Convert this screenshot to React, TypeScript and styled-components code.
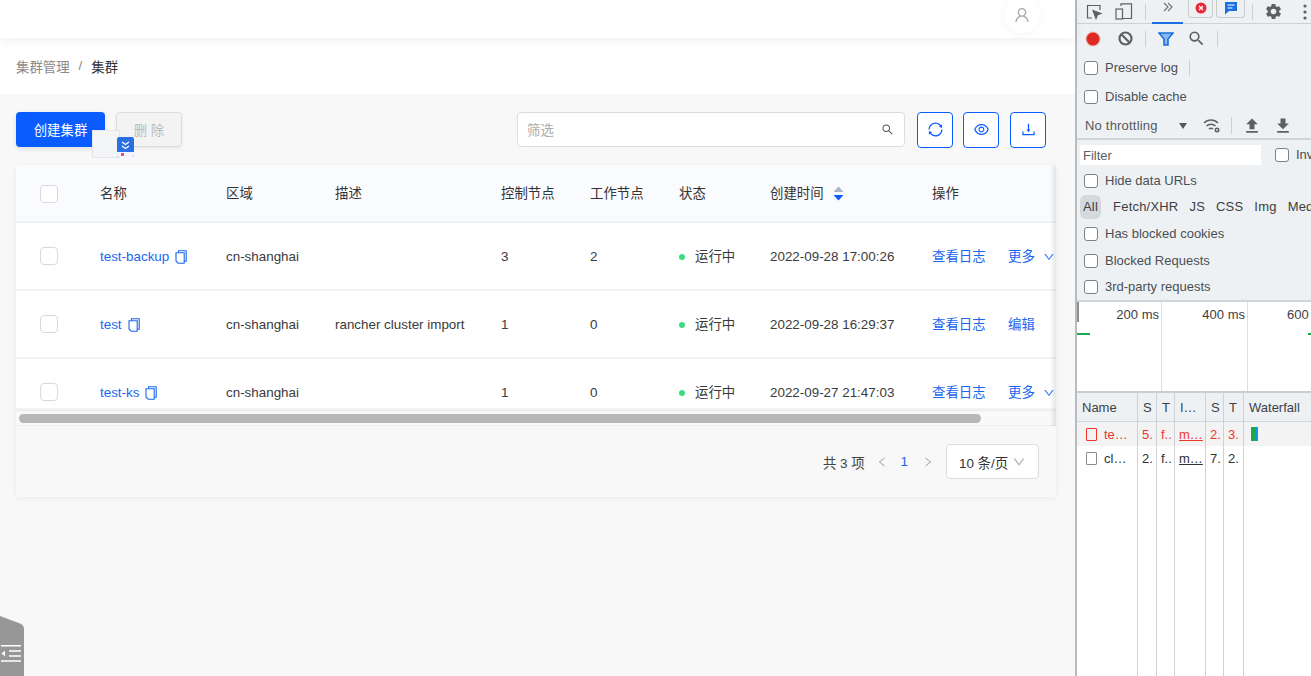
import React from "react";
import styled, { createGlobalStyle } from "styled-components";
import { AiOutlineSync, AiOutlineEye, AiOutlineDownload, AiOutlineUser, AiOutlineDown, AiOutlineLeft, AiOutlineRight, AiOutlineSearch } from "react-icons/ai";
import { MdSearch, MdSettings, MdFileUpload, MdFileDownload } from "react-icons/md";

const Global = createGlobalStyle`
  html, body { margin: 0; padding: 0; height: 100%; overflow: hidden; }
  * { box-sizing: border-box; }
  body { font-family: "Liberation Sans", "Noto Sans CJK SC", sans-serif; }
`;
const BLUE = "#0a5cff";
const LINK = "#1a66f0";

const Page = styled.div`display: flex; width: 1311px; height: 676px; overflow: hidden; position: relative;`;
const Main = styled.main`width: 1075px; height: 676px; background: #f8f8f8; display: flex; flex-direction: column; flex: none; position: relative;`;
const Header = styled.header`height: 38px; flex: none; background: #fff; box-shadow: 0 2px 10px rgba(0,0,0,.07); display: flex; justify-content: flex-end; padding-right: 35px; position: relative; z-index: 2;`;
const Avatar = styled.div`width: 36px; height: 36px; margin-top: -3px; border-radius: 50%; background: #fff; box-shadow: 0 1px 8px rgba(0,0,0,.05); display: flex; align-items: center; justify-content: center; color: #aaa; font-size: 18px;`;
const Crumbs = styled.nav`height: 56px; flex: none; background: #fff; display: flex; align-items: center; padding: 0 16px 1px; font-size: 13.4px; color: #8a8a8a; gap: 9px;`;
const CrumbNow = styled.span`color: #333;`;
const Body = styled.div`padding: 17px 19px 0 16px; display: flex; flex-direction: column;`;
const Toolbar = styled.div`height: 36px; display: flex; align-items: center; position: relative; padding-right: 10px;`;
const Primary = styled.button`width: 89px; height: 35px; border: 0; border-radius: 4px; background: ${BLUE}; color: #fff; font: inherit; font-size: 13.4px; box-shadow: 0 2px 5px rgba(0,0,0,.1);`;
const Disabled = styled.button`width: 66px; height: 35px; margin-left: 11px; border: 1px solid #ddd; border-radius: 4px; background: #f3f3f3; color: #bbb; font: inherit; font-size: 13.4px; box-shadow: 0 1px 3px rgba(0,0,0,.08);`;
const Spacer = styled.div`flex: 1;`;
const SearchBox = styled.div`width: 388px; height: 35px; background: #fff; border: 1px solid #dcdcdc; border-radius: 4px; display: flex; align-items: center; justify-content: space-between; padding: 0 10px 0 9px; color: #aaa; font-size: 13.4px; svg { color: #555; font-size: 13px; }`;
const IconBtn = styled.div<{ $gap: number }>`width: 36px; height: 36px; margin-top: 1px; margin-left: ${p => p.$gap}px; border: 1px solid ${BLUE}; border-radius: 4px; background: #fff; color: ${BLUE}; display: flex; align-items: center; justify-content: center; font-size: 17px;`;
const Ghost = styled.div`position: absolute; left: 76px; top: 19px; width: 28px; height: 28px; background: #f4f5f9; border: 1px solid #e3e5ea;`;
const Extension = styled.svg`position: absolute; left: 101px; top: 26px;`;
const Card = styled.section`margin-top: 18px; background: #f8f8f8; border-radius: 4px; box-shadow: 0 1px 6px rgba(0,0,0,.07); overflow: hidden; position: relative;`;
const Row = styled.div<{ $head?: boolean; $h: number }>`
  display: grid; grid-template-columns: 84px 126px 109px 166px 89px 89px 91px 162px 76px 48px;
  height: ${p => p.$h}px; align-items: ${p => p.$head ? "center" : "start"}; padding-top: ${p => p.$head ? 1 : 26}px;
  background: ${p => p.$head ? "#fafbff" : "#fff"}; border-bottom: 2px solid ${p => p.$head ? "#f0f1f4" : "#f3f3f3"};
  font-size: 13.4px; line-height: 16px; color: ${p => p.$head ? "#333" : "#3a3a3a"};
  &:last-of-type { border-bottom: 0; }
`;
const CheckCell = styled.div`padding-left: 24px; height: 14px; display: flex; align-items: center;`;
const Box = styled.span`display: block; width: 18px; height: 18px; border: 1px solid #d9d9d9; border-radius: 4px; background: #fff; flex: none;`;
const Link = styled.a`color: ${LINK}; display: inline-flex; align-items: center; gap: 6px;`;
const More = styled(Link)`gap: 8px; white-space: nowrap; svg { font-size: 12px; }`;
const Status = styled.span`display: inline-flex; align-items: center; gap: 10px;`;
const Dot = styled.i`width: 6px; height: 6px; border-radius: 50%; background: #3ddc84;`;
const SortHead = styled.span`display: inline-flex; align-items: center; gap: 9px; svg { flex: none; }`;
const Edge = styled.div`position: absolute; top: 0; right: 0; width: 6px; height: 261px; background: linear-gradient(to right, rgba(0,0,0,0), rgba(0,0,0,.1));`;
const Track = styled.div`height: 16px; background: #f9f9f9; border-top: 1px solid #ececec; border-bottom: 1px solid #ececec; padding: 3px 3px;`;
const Thumb = styled.div`width: 962px; height: 9px; border-radius: 5px; background: #b7b7b7;`;
const Pager = styled.div`height: 71px; display: flex; align-items: center; justify-content: flex-end; padding: 0 17px 0 0; font-size: 13.4px; color: #444;`;
const Arrow = styled.span<{ $gap: number }>`color: #aaa; font-size: 16px; display: flex; width: 12px; justify-content: center; margin-left: ${p => p.$gap}px;`;
const PageNo = styled.span`color: ${LINK}; margin-left: 13px; margin-right: 3px;`;
const PageSize = styled.div`width: 93px; height: 35px; margin-left: 12px; border: 1px solid #ddd; border-radius: 4px; background: #fff; display: flex; align-items: center; justify-content: center; gap: 4px; color: #333; svg { color: #aaa; font-size: 14px; }`;
const SideToggle = styled.svg`position: absolute; left: 0; bottom: 0;`;

const Dev = styled.aside`width: 236px; flex: none; height: 676px; background: #eef1f3; border-left: 2px solid #b9bcbf; color: #4b4f53; font-size: 13px; line-height: 16px; display: flex; flex-direction: column; overflow: hidden; white-space: nowrap;`;
const DevTop = styled.div`height: 24px; flex: none; border-bottom: 1px solid #cfd2d5; display: flex; align-items: center; position: relative; color: #5c6065;`;
const Sep = styled.i<{ $h?: number; $l?: number }>`display: block; width: 1px; height: ${p => p.$h ?? 16}px; margin-left: ${p => p.$l ?? 0}px; background: #cdd0d3; flex: none;`;
const Tab = styled.div`width: 31px; height: 24px; margin-left: 6px; border-bottom: 2px solid #1a6fe0; display: flex; justify-content: center; padding-top: 1px; flex: none;`;
const Badge = styled.div<{ $w: number; $l: number }>`width: ${p => p.$w}px; height: 18px; margin-left: ${p => p.$l}px; border: 1px solid #c7cacd; border-top: 0; border-radius: 0 0 4px 4px; margin-top: -6px; display: flex; align-items: center; justify-content: center; flex: none;`;
const Glyph = styled.svg<{ $l?: number }>`margin-left: ${p => p.$l ?? 0}px; flex: none;`;
const DevRow = styled.div<{ $h: number }>`height: ${p => p.$h}px; flex: none; display: flex; align-items: center; padding-left: 7px;`;
const Tick = styled.span<{ $l?: number }>`width: 14px; height: 14px; margin-left: ${p => p.$l ?? 0}px; border: 1px solid #7d8084; border-radius: 3px; background: #fff; margin-right: 7px; flex: none;`;
const Throttle = styled.div`height: 29px; flex: none; display: flex; align-items: center; padding-left: 8px; border-bottom: 2px solid #d2d5d8; color: #55595d; letter-spacing: .2px; padding-top: 2px;`;
const Triangle = styled.i`width: 0; height: 0; border: 4px solid transparent; border-top: 6px solid #55595d; border-bottom: 0; margin-left: 21px; flex: none;`;
const FilterBar = styled.div`height: 24px; flex: none; display: flex; align-items: center; padding-left: 3px; margin-top: 3px;`;
const FilterInput = styled.div`width: 181px; height: 20px; background: #fff; padding: 3px 3px 0; color: #5c6065; flex: none;`;
const Types = styled.div`height: 26px; flex: none; display: flex; align-items: center; padding-left: 3px; color: #3d4043; letter-spacing: .2px;`;
const TypeAll = styled.span`background: #d5d8dc; border-radius: 6px; padding: 4px 3px; margin-right: 12px;`;
const TypeItem = styled.span`margin-right: 11px;`;
const Timeline = styled.div`height: 91px; flex: none; background: #fff; border-top: 2px solid #d2d5d8; display: grid; grid-template-columns: 85px 86px 85px; position: relative; color: #3d4043;`;
const Tl = styled.div`border-right: 1px solid #dcdfe2; text-align: right; padding: 5px 2px 0 0;`;
const TlLast = styled(Tl)`text-align: left; padding-left: 39px; border-right: 0;`;
const Mark = styled.i<{ $l: number; $w: number }>`position: absolute; top: 31px; height: 2px; left: ${p => p.$l}px; width: ${p => p.$w}px; background: #1ba94c;`;
const Handle = styled.i`position: absolute; left: 0; top: 0; width: 2px; height: 20px; background: #8d8d8d;`;
const Net = styled.div`flex: 1; background: #fff; border-top: 2px solid #c9ccd0; display: flex;`;
const Col = styled.div<{ $w: number; $flex?: boolean }>`width: ${p => p.$w}px; flex: ${p => p.$flex ? "1" : "none"}; border-right: 1px solid #cfd2d5; overflow: hidden; &:last-child { border-right: 0; }`;
const HeadCell = styled.div`height: 29px; background: #eef1f3; border-bottom: 1px solid #d5d8db; padding: 7px 0 0 5px; color: #3d4043; overflow: hidden;`;
const Cell = styled.div<{ $err?: boolean; $alt?: boolean; $u?: boolean }>`
  height: 24px; padding: 5px 0 0 4px; background: ${p => p.$alt ? "#f3f3f3" : "#fff"};
  color: ${p => p.$err ? "#f0352b" : "#303336"}; overflow: hidden; display: flex; align-items: flex-start;
  span { text-decoration: ${p => p.$u ? "underline" : "none"}; }
`;
const FileIcon = styled.i<{ $err?: boolean }>`display: block; width: 11px; height: 13px; border: 1px solid ${p => p.$err ? "#f0352b" : "#8a8d90"}; margin: 1px 7px 0 5px; border-radius: 1px; flex: none;`;
const WaterBar = styled.i`display: block; width: 7px; height: 14px; margin: 0 0 0 3px; background: linear-gradient(to right, #1ba94c 0 4px, #1a8fe8 4px);`;
const ToolSetting = styled(MdSettings)`margin-left: 11px; font-size: 19px; flex: none;`;
const ToolSearch = styled(MdSearch)`margin-left: 13px; font-size: 19px; color: #5c6065; flex: none;`;
const ToolUp = styled(MdFileUpload)`margin-left: 10px; font-size: 20px; color: #5c6065; flex: none;`;
const ToolDown = styled(MdFileDownload)`margin-left: 11px; font-size: 20px; color: #5c6065; flex: none;`;

const Copy = () => (
  <svg width="12" height="14" viewBox="0 0 12 14" fill="none" stroke="currentColor" strokeWidth="1.1">
    <path d="M3.5 2.5V.8h7.7v10.4H9.2" /><path d="M1 2.8h8.2v10.4H3.2L1 11V2.8z" />
  </svg>
);
const Chevrons = () => (
  <svg width="12" height="12" viewBox="0 0 12 12" fill="none" stroke="#73777b" strokeWidth="1.2"><path d="M2 2l4 4-4 4M6 2l4 4-4 4" /></svg>
);
const SortIcon = () => (
  <svg width="11" height="15" viewBox="0 0 11 15"><path d="M5.500 0.500L10.500 6H.5z" fill="#a8b4c8" /><path d="M.5 9h10L5.500 14.500z" fill={BLUE} /></svg>
);

const rows = [
  { name: "test-backup", desc: "", c: 3, w: 2, t: "2022-09-28 17:00:26", op: "更多", h: 68 },
  { name: "test", desc: "rancher cluster import", c: 1, w: 0, t: "2022-09-28 16:29:37", op: "编辑", h: 68 },
  { name: "test-ks", desc: "", c: 1, w: 0, t: "2022-09-27 21:47:03", op: "更多", h: 51 },
];
const cols = [
  { w: 61, h: "Name", a: "te…", b: "cl…", file: true },
  { w: 19, h: "S", a: "5.", b: "2." },
  { w: 18, h: "T", a: "f..", b: "f.." },
  { w: 31, h: "I…", a: "m…", b: "m…", u: true },
  { w: 18, h: "S", a: "2.", b: "7." },
  { w: 20, h: "T", a: "3.", b: "2." },
];

export default function App() {
  return (
    <Page>
      <Global />
      <Main>
        <Header><Avatar><AiOutlineUser /></Avatar></Header>
        <Crumbs>集群管理<span>/</span><CrumbNow>集群</CrumbNow></Crumbs>
        <Body>
          <Toolbar>
            <Primary>创建集群</Primary>
            <Disabled>删 除</Disabled>
            <Spacer />
            <SearchBox>筛选<AiOutlineSearch /></SearchBox>
            <IconBtn $gap={12}><AiOutlineSync /></IconBtn>
            <IconBtn $gap={10}><AiOutlineEye /></IconBtn>
            <IconBtn $gap={11}><AiOutlineDownload /></IconBtn>
            <Ghost />
            <Extension width="17" height="20" viewBox="0 0 17 20">
              <rect width="17" height="20" rx="2" fill="#2b6fe6" />
              <path d="M0 15h17v3a2 2 0 0 1-2 2H2a2 2 0 0 1-2-2z" fill="#f1f4fb" />
              <rect x="4" y="16" width="3" height="3" fill="#f0506e" />
              <path d="M5 5l3.500 2.500L12 5M5 9l3.500 2.500L12 9" stroke="#fff" strokeWidth="1.300" fill="none" />
            </Extension>
          </Toolbar>
          <Card>
            <Row $head $h={58}>
              <CheckCell><Box /></CheckCell>
              <span>名称</span><span>区域</span><span>描述</span><span>控制节点</span><span>工作节点</span><span>状态</span>
              <SortHead>创建时间<SortIcon /></SortHead>
              <span>操作</span><span />
            </Row>
            {rows.map(r => (
              <Row key={r.name} $h={r.h}>
                <CheckCell><Box /></CheckCell>
                <div><Link>{r.name}<Copy /></Link></div>
                <span>cn-shanghai</span>
                <span>{r.desc}</span>
                <span>{r.c}</span>
                <span>{r.w}</span>
                <Status><Dot />运行中</Status>
                <span>{r.t}</span>
                <Link>查看日志</Link>
                <More>{r.op}{r.op === "更多" && <AiOutlineDown />}</More>
              </Row>
            ))}
            <Edge />
            <Track><Thumb /></Track>
            <Pager>
              共 3 项
              <Arrow $gap={11}><AiOutlineLeft /></Arrow>
              <PageNo>1</PageNo>
              <Arrow $gap={11}><AiOutlineRight /></Arrow>
              <PageSize>10 条/页<AiOutlineDown /></PageSize>
            </Pager>
          </Card>
        </Body>
        <SideToggle width="24" height="60" viewBox="0 0 24 60">
          <path d="M0 0L20 7.500Q24 9 24 13V60H0z" fill="#979797" />
          <path d="M1 29.700h20M9 35h12M9 40h12M1 45h20" stroke="#fff" strokeWidth="1.500" />
          <path d="M1.500 37.500l3.500-2.800v5.600z" fill="#fff" />
        </SideToggle>
      </Main>
      <Dev>
        <DevTop>
          <Glyph $l={9} width="16" height="16" viewBox="0 0 16 16" fill="none" stroke="#5c6065" strokeWidth="1.200">
            <path d="M6 14H1.500V1.500H14V6" /><path d="M7 6.500l8 3-3.500 1.300L10 14.500z" fill="#5c6065" />
          </Glyph>
          <Glyph $l={13} width="18" height="18" viewBox="0 0 18 18" fill="none" stroke="#5c6065" strokeWidth="1.200">
            <path d="M6 3V.8h10.500v14.700H8" /><rect x="1" y="6" width="6.500" height="10" />
          </Glyph>
          <Sep $l={12} />
          <Tab><Chevrons /></Tab>
          <Badge $w={25} $l={5}>
            <svg width="12" height="12" viewBox="0 0 12 12"><circle cx="6" cy="6" r="5.500" fill="#e8293a" /><path d="M4 4l4 4M8 4l-4 4" stroke="#fff" strokeWidth="1.200" /></svg>
          </Badge>
          <Badge $w={29} $l={3}>
            <svg width="14" height="14" viewBox="0 0 14 14"><path d="M1 1h12v9H5l-4 3.500z" fill="#1a6fe0" /><path d="M3.500 4h7M3.500 7h5" stroke="#fff" strokeWidth="1.100" /></svg>
          </Badge>
          <Sep $l={7} />
          <ToolSetting />
          <Glyph $l={20} width="4" height="16" viewBox="0 0 4 16" fill="#5c6065"><circle cx="2" cy="2" r="1.600" /><circle cx="2" cy="8" r="1.600" /><circle cx="2" cy="14" r="1.600" /></Glyph>
        </DevTop>
        <DevRow $h={29}>
          <Glyph $l={1} width="16" height="16" viewBox="0 0 16 16"><circle cx="8" cy="8" r="7.500" fill="#e8b9b6" /><circle cx="8" cy="8" r="6.500" fill="#dd2a22" /></Glyph>
          <Glyph $l={17} width="15" height="15" viewBox="0 0 15 15" fill="none" stroke="#5c6065" strokeWidth="2.200"><circle cx="7.500" cy="7.500" r="6" /><path d="M3.300 3.300l8.400 8.400" /></Glyph>
          <Sep $l={12} />
          <Glyph $l={12} width="16" height="14" viewBox="0 0 16 14" fill="none" stroke="#1a6fe0" strokeWidth="1.600"><path d="M1 1h14L10 7v6H6V7z" fill="#8db8f0" /></Glyph>
          <ToolSearch />
          <Sep $l={11} />
        </DevRow>
        <DevRow $h={29}><Tick />Preserve log<Sep $l={11} /></DevRow>
        <DevRow $h={29}><Tick />Disable cache</DevRow>
        <Throttle>
          No throttling
          <Triangle />
          <Glyph $l={16} width="18" height="16" viewBox="0 0 18 16" fill="none" stroke="#5c6065" strokeWidth="1.500">
            <path d="M1 5c4-4 10-4 14 0M3.500 8c2.500-2.500 6.500-2.500 9 0M6 11c1-1 3-1 4 0" /><circle cx="14" cy="12" r="2.500" fill="#5c6065" stroke="none" /><circle cx="14" cy="12" r=".9" fill="#eef1f3" stroke="none" />
          </Glyph>
          <Sep $h={17} $l={10} />
          <ToolUp />
          <ToolDown />
        </Throttle>
        <FilterBar>
          <FilterInput>Filter</FilterInput>
          <Tick $l={14} />Inv
        </FilterBar>
        <DevRow $h={27}><Tick />Hide data URLs</DevRow>
        <Types>
          <TypeAll>All</TypeAll>
          <TypeItem>Fetch/XHR</TypeItem><TypeItem>JS</TypeItem><TypeItem>CSS</TypeItem><TypeItem>Img</TypeItem><TypeItem>Med</TypeItem>
        </Types>
        <DevRow $h={27}><Tick />Has blocked cookies</DevRow>
        <DevRow $h={27}><Tick />Blocked Requests</DevRow>
        <DevRow $h={26}><Tick />3rd-party requests</DevRow>
        <Timeline>
          <Tl>200 ms</Tl><Tl>400 ms</Tl><TlLast>600</TlLast>
          <Handle />
          <Mark $l={0} $w={13} />
          <Mark $l={231} $w={4} />
        </Timeline>
        <Net>
          {cols.map((c, i) => (
            <Col key={i} $w={c.w}>
              <HeadCell>{c.h}</HeadCell>
              <Cell $alt $err $u={c.u}>{c.file && <FileIcon $err />}<span>{c.a}</span></Cell>
              <Cell $u={c.u}>{c.file && <FileIcon />}<span>{c.b}</span></Cell>
            </Col>
          ))}
          <Col $w={66} $flex>
            <HeadCell>Waterfall</HeadCell>
            <Cell $alt><WaterBar /></Cell>
            <Cell />
          </Col>
        </Net>
      </Dev>
    </Page>
  );
}
